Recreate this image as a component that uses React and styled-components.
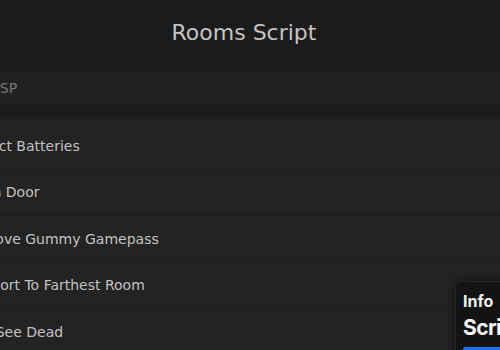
import React from "react";
import styled, { createGlobalStyle } from "styled-components";

const Global = createGlobalStyle`
  html, body { margin: 0; padding: 0; background: #1b1b1b; overflow: hidden; }
  #root { width: 500px; height: 350px; overflow: hidden; position: relative; }
`;

const Window = styled.div`
  margin-left: -45px;
  width: 576px;
  height: 350px;
  display: flex;
  flex-direction: column;
  background: #1b1b1b;
  font-family: "DejaVu Sans", sans-serif;
`;

const Header = styled.div`
  height: 72px;
  flex: none;
  display: flex;
  align-items: center;
  justify-content: center;
  padding-bottom: 8px;
  box-sizing: border-box;
  background: #1b1b1b;
`;

const Title = styled.h1`
  margin: 0;
  margin-left: 2px;
  font-size: 22px;
  font-weight: 400;
  color: #c4c4c4;
`;

const SectionLabel = styled.div`
  height: 32px;
  flex: none;
  display: flex;
  align-items: center;
  padding-left: 36px;
  background: #212121;
  color: #767676;
  font-size: 14px;
`;

const Band = styled.div`
  height: 19px;
  flex: none;
  background: linear-gradient(#1b1b1b 0px, #1c1c1c 11px, #232323 19px);
`;

const List = styled.div`
  display: flex;
  flex-direction: column;
`;

const Row = styled.div`
  height: 45.5px;
  flex: none;
  display: flex;
  align-items: center;
  padding-left: 9px;
  background: #232323;
  border-bottom: 1px solid #1d1d1d;
  color: #c2c2c2;
  font-size: 14px;
  white-space: nowrap;
`;

const Toast = styled.div`
  position: absolute;
  left: 455px;
  top: 281px;
  width: 120px;
  height: 100px;
  box-sizing: border-box;
  padding: 9px 0 0 7px;
  background: #131313;
  border: 1px solid #262626;
  border-radius: 6px;
  box-shadow: 0 0 10px rgba(0, 0, 0, 0.5);
  font-family: Inter, "DejaVu Sans", sans-serif;
  display: flex;
  flex-direction: column;
`;

const ToastTitle = styled.div`
  font-size: 16px;
  font-weight: 700;
  color: #f2f2f2;
  line-height: 20px;
`;

const ToastText = styled.div`
  font-size: 21px;
  font-weight: 700;
  letter-spacing: -0.6px;
  color: #f4f4f4;
  line-height: 28px;
  margin-top: 3px;
  white-space: nowrap;
`;

const Progress = styled.div`
  margin-top: 5px;
  height: 5px;
  border-radius: 3px 0 0 3px;
  background: #1f6fe5;
`;

const items = [
  "Collect Batteries",
  "Open Door",
  "Remove Gummy Gamepass",
  "Teleport To Farthest Room",
  "Can See Dead",
];

export default function App() {
  return (
    <>
      <Global />
      <Window>
        <Header>
          <Title>Rooms Script</Title>
        </Header>
        <SectionLabel>ESP</SectionLabel>
        <Band />
        <List>
          {items.map((t) => (
            <Row key={t}>{t}</Row>
          ))}
        </List>
      </Window>
      <Toast>
        <ToastTitle>Info</ToastTitle>
        <ToastText>Script</ToastText>
        <Progress />
      </Toast>
    </>
  );
}
